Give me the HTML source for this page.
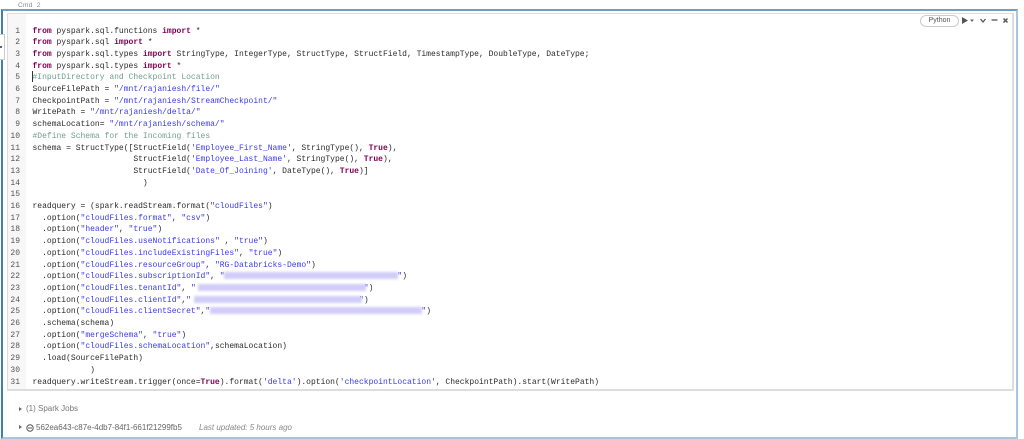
<!DOCTYPE html>
<html><head><meta charset="utf-8">
<style>
html,body{margin:0;padding:0;background:#fff;width:1024px;height:435px;overflow:hidden;font-family:"Liberation Sans",sans-serif}
.a{position:absolute}
#code{left:32.5px;top:25.5px;font:8px/11.7px "Liberation Mono",monospace;color:#2b2b2b;white-space:pre;filter:blur(.35px)}
#nums{left:8px;top:25.5px;width:12px;text-align:right;font:8px/11.7px "Liberation Mono",monospace;color:#555;white-space:pre;filter:blur(.35px)}
b{color:#7f0055;font-weight:bold}
i{color:#3a3af0;font-style:normal}
u{color:#6f9f8f;text-decoration:none}
.bl{position:absolute;background:#d2ccf9;filter:blur(1.2px);height:7px}
</style></head><body>
<div class="a" style="left:18px;top:2px;font-size:6.5px;color:#888;letter-spacing:.3px">Cmd&nbsp; 2</div>
<div class="a" style="left:1px;top:9px;width:1017px;height:430px;border:2px solid #a9c6dc;border-left:2px solid #3f7fae;border-top-color:#6f9fc4;box-sizing:border-box"></div>
<div class="a" style="left:7px;top:13px;width:1007px;height:378px;border:1px solid #ddd;border-bottom:2px solid #ddd;border-right:2px solid #ddd;box-sizing:border-box;background:#fff"></div>
<div class="a" style="left:8px;top:14px;width:18px;height:375px;background:#f7f7f7"></div>
<div class="a" style="left:0;top:34px;width:5px;height:26px;background:#fff;border:1px solid #ccc;border-left:0;box-sizing:border-box"></div>
<div class="a" style="left:0;top:46px;width:2px;height:2px;background:#567"></div>
<div class="a" style="left:920px;top:15px;width:37px;height:10px;border:1px solid #ccc;border-radius:6px;font-size:7px;line-height:10px;text-align:center;color:#555">Python</div>
<svg class="a" style="left:960px;top:15px" width="50" height="11" viewBox="0 0 50 11">
<path d="M2 2 L8 5.5 L2 9Z" fill="#555"/><path d="M10 4.5h4l-2 2.500z" fill="#666"/>
<path d="M20.500 4l2.500 3 2.500-3" stroke="#555" stroke-width="1.300" fill="none"/>
<path d="M31.500 5h6" stroke="#555" stroke-width="1.300"/>
<path d="M43.500 3.500l4 4m0-4l-4 4" stroke="#555" stroke-width="1.500"/>
</svg>
<div class="a" id="nums"> 1
 2
 3
 4
 5
 6
 7
 8
 9
10
11
12
13
14
15
16
17
18
19
20
21
22
23
24
25
26
27
28
29
30
31</div>
<div class="a" id="code"><b>from</b> pyspark.sql.functions <b>import</b> *
<b>from</b> pyspark.sql <b>import</b> *
<b>from</b> pyspark.sql.types <b>import</b> StringType, IntegerType, StructType, StructField, TimestampType, DoubleType, DateType;
<b>from</b> pyspark.sql.types <b>import</b> *
<u>#InputDirectory and Checkpoint Location</u>
SourceFilePath = <i>"/mnt/rajaniesh/file/"</i>
CheckpointPath = <i>"/mnt/rajaniesh/StreamCheckpoint/"</i>
WritePath = <i>"/mnt/rajaniesh/delta/"</i>
schemaLocation= <i>"/mnt/rajaniesh/schema/"</i>
<u>#Define Schema for the Incoming files</u>
schema = StructType([StructField(<i>'Employee_First_Name'</i>, StringType(), <b>True</b>),
                     StructField(<i>'Employee_Last_Name'</i>, StringType(), <b>True</b>),
                     StructField(<i>'Date_Of_Joining'</i>, DateType(), <b>True</b>)]
                       )

readquery = (spark.readStream.format(<i>"cloudFiles"</i>)
  .option(<i>"cloudFiles.format"</i>, <i>"csv"</i>)
  .option(<i>"header"</i>, <i>"true"</i>)
  .option(<i>"cloudFiles.useNotifications"</i> , <i>"true"</i>)
  .option(<i>"cloudFiles.includeExistingFiles"</i>, <i>"true"</i>)
  .option(<i>"cloudFiles.resourceGroup"</i>, <i>"RG-Databricks-Demo"</i>)
  .option(<i>"cloudFiles.subscriptionId"</i>, <i>"</i>                                    <i>"</i>)
  .option(<i>"cloudFiles.tenantId"</i>, <i>"</i>                                   <i>"</i>)
  .option(<i>"cloudFiles.clientId"</i>,<i>"</i>                                   <i>"</i>)
  .option(<i>"cloudFiles.clientSecret"</i>,<i>"</i>                                            <i>"</i>)
  .schema(schema)
  .option(<i>"mergeSchema"</i>, <i>"true"</i>)
  .option(<i>"cloudFiles.schemaLocation"</i>,schemaLocation)
  .load(SourceFilePath)
            )
readquery.writeStream.trigger(once=<b>True</b>).format(<i>'delta'</i>).option(<i>'checkpointLocation'</i>, CheckpointPath).start(WritePath)</div>
<div class="bl" style="left:224px;top:272px;width:174px"></div>
<div class="bl" style="left:198px;top:284px;width:168px"></div>
<div class="bl" style="left:194px;top:296px;width:168px"></div>
<div class="bl" style="left:210px;top:307px;width:212px"></div>
<div class="a" style="left:32px;top:71px;width:1px;height:11px;background:#333"></div>
<div class="a" style="left:19px;top:407px;width:0;height:0;border-left:3px solid #666;border-top:2.500px solid transparent;border-bottom:2.500px solid transparent"></div>
<div class="a" style="left:26px;top:403.500px;font-size:8px;line-height:10px;color:#777">(1) Spark Jobs</div>
<div class="a" style="left:19px;top:425px;width:0;height:0;border-left:3px solid #666;border-top:2.500px solid transparent;border-bottom:2.500px solid transparent"></div>
<svg class="a" style="left:26px;top:424px" width="8" height="8" viewBox="0 0 8 8"><circle cx="4" cy="4" r="3.200" fill="none" stroke="#555"/><path d="M2 4h4" stroke="#555"/></svg>
<div class="a" style="left:36px;top:423px;font-size:8px;line-height:10px;color:#666;white-space:nowrap">562ea643-c87e-4db7-84f1-661f21299fb5</div>
<div class="a" style="left:199px;top:423px;font-size:8px;line-height:10px;color:#888;font-style:italic;white-space:nowrap">Last updated: 5 hours ago</div>
</body></html>
